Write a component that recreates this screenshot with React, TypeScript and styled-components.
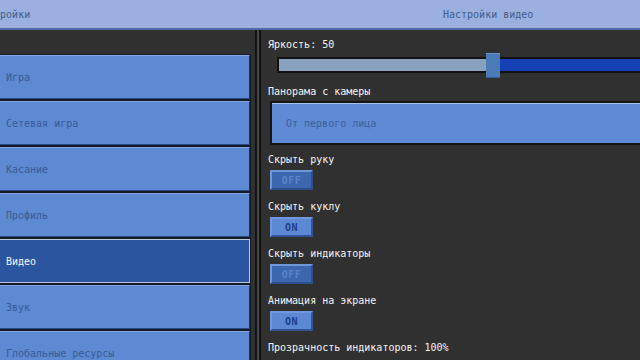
import React from 'react';
import styled, { createGlobalStyle } from 'styled-components';

const GlobalStyle = createGlobalStyle`
  html, body {
    margin: 0;
    padding: 0;
    background: #303030;
    overflow: hidden;
  }
  * { box-sizing: border-box; }
`;

const Screen = styled.div`
  width: 640px;
  height: 360px;
  overflow: hidden;
  display: flex;
  flex-direction: column;
  font-family: "DejaVu Sans Mono", "Liberation Mono", monospace;
  font-size: 10px;
  background: #303030;
`;

const Header = styled.div`
  height: 30px;
  flex-shrink: 0;
  display: flex;
  align-items: center;
  background: #9bb0de;
  border-bottom: 2px solid #4f6ba6;
  color: #405d8e;
`;

const HeaderLeft = styled.div`
  width: 261px;
  flex-shrink: 0;
  margin-left: -24px;
  white-space: nowrap;
`;

const HeaderTitle = styled.div`
  padding-left: 206px;
  white-space: nowrap;
`;

const Body = styled.div`
  flex: 1;
  display: flex;
  min-height: 0;
`;

const SideColumn = styled.div`
  width: 250px;
  flex-shrink: 0;
  padding-top: 25px;
  display: flex;
  flex-direction: column;
  gap: 2px;
`;

const NavButton = styled.div<{ $active?: boolean }>`
  height: 44px;
  flex-shrink: 0;
  display: flex;
  align-items: center;
  padding-left: 6px;
  background: ${p => (p.$active ? '#2b559e' : '#5e89d3')};
  color: ${p => (p.$active ? '#f4f6fb' : '#385b96')};
  border-top: 1px solid ${p => (p.$active ? '#b9c7e0' : '#86a6e0')};
  border-bottom: 1px solid ${p => (p.$active ? '#b9c7e0' : '#2c4a82')};
  border-right: 1px solid ${p => (p.$active ? '#b9c7e0' : '#1d2f55')};
  box-shadow: 0 0 0 1px #141a26;
  white-space: nowrap;
`;

const Divider = styled.div`
  width: 6px;
  margin-left: 5px;
  flex-shrink: 0;
  background: #474747;
  border-left: 2px solid #121212;
  border-right: 2px solid #121212;
`;

const Panel = styled.div`
  width: 460px;
  flex-shrink: 0;
  padding: 8px 0 0 7px;
  display: flex;
  flex-direction: column;
`;

const Label = styled.div`
  height: 14px;
  line-height: 14px;
  color: #f4f4f4;
  white-space: nowrap;
`;

const SliderRow = styled.div`
  height: 26px;
  margin: 0 0 7px 9px;
  display: flex;
  align-items: center;
`;

const Track = styled.div<{ $filled?: boolean }>`
  height: 16px;
  background: ${p => (p.$filled ? '#1541b4' : '#8aa0bf')};
  border-top: 2px solid #111;
  border-bottom: 2px solid #111;
  border-left: ${p => (p.$filled ? 'none' : '2px solid #111')};
`;

const Thumb = styled.div`
  width: 14px;
  height: 25px;
  flex-shrink: 0;
  background: #4a7bb7;
  border-top: 1px solid #6a95cc;
  border-bottom: 1px solid #33609c;
`;

const Dropdown = styled.div`
  height: 44px;
  margin: 2px 0 8px 2px;
  display: flex;
  align-items: center;
  padding-left: 14px;
  background: #5f8ad5;
  color: #3c5f9c;
  border: 2px solid #141414;
  border-right: none;
  box-shadow: inset 0 1px 0 #a9c0ea;
  white-space: nowrap;
`;

const Toggle = styled.div<{ $on?: boolean }>`
  width: 43px;
  height: 20px;
  margin: 3px 0 10px 2px;
  display: flex;
  align-items: center;
  justify-content: center;
  background: ${p => (p.$on ? '#5c88d4' : '#3c67af')};
  color: ${p => (p.$on ? '#1c418b' : '#5b84c9')};
  border-top: 2px solid ${p => (p.$on ? '#6f98de' : '#6f97d9')};
  border-left: 2px solid ${p => (p.$on ? '#6f98de' : '#6f97d9')};
  border-bottom: 2px solid ${p => (p.$on ? '#2f5597' : '#2c4f8c')};
  border-right: 2px solid ${p => (p.$on ? '#2f5597' : '#2c4f8c')};
  font-weight: bold;
  letter-spacing: 0.5px;
`;

const navItems = ['Игра', 'Сетевая игра', 'Касание', 'Профиль', 'Видео', 'Звук', 'Глобальные ресурсы'];

const toggles = [
  { label: 'Скрыть руку', on: false },
  { label: 'Скрыть куклу', on: true },
  { label: 'Скрыть индикаторы', on: false },
  { label: 'Анимация на экране', on: true },
];

const brightness = 50;

export default function App() {
  return (
    <Screen>
      <GlobalStyle />
      <Header>
        <HeaderLeft>Настройки</HeaderLeft>
        <HeaderTitle>Настройки видео</HeaderTitle>
      </Header>
      <Body>
        <SideColumn>
          {navItems.map(item => (
            <NavButton key={item} $active={item === 'Видео'}>
              {item}
            </NavButton>
          ))}
        </SideColumn>
        <Divider />
        <Panel>
          <Label>Яркость: {brightness}</Label>
          <SliderRow>
            <Track style={{ width: 209 }} />
            <Thumb />
            <Track $filled style={{ flex: 1 }} />
          </SliderRow>
          <Label>Панорама с камеры</Label>
          <Dropdown>От первого лица</Dropdown>
          {toggles.map(t => (
            <React.Fragment key={t.label}>
              <Label>{t.label}</Label>
              <Toggle $on={t.on}>{t.on ? 'ON' : 'OFF'}</Toggle>
            </React.Fragment>
          ))}
          <Label>Прозрачность индикаторов: 100%</Label>
        </Panel>
      </Body>
    </Screen>
  );
}
